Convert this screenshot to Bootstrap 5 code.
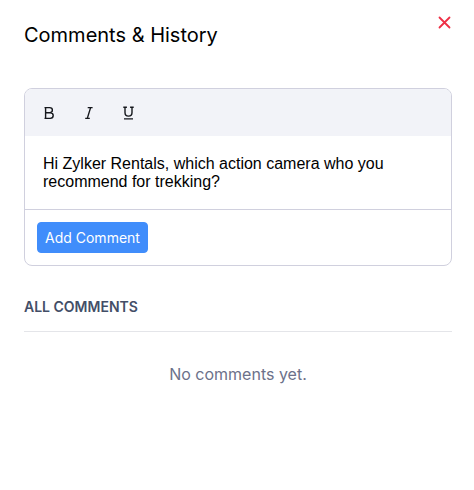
<!DOCTYPE html>
<html lang="en">
<head>
<meta charset="utf-8">
<meta name="viewport" content="width=device-width, initial-scale=1">
<title>Comments &amp; History</title>
<link href="https://cdn.jsdelivr.net/npm/bootstrap@5.3.0/dist/css/bootstrap.min.css" rel="stylesheet">
<style>
body { font-family: Inter, sans-serif; background: #fff; color: #000; }
.panel { padding: 16px 22px 24px 24px; }
.panel-title { font-size: 20px; line-height: 24px; font-weight: 400; margin-top: 7px; }
.icon-btn { line-height: 0; color: #15171c; }
.icon-btn svg { display: block; }
.close-btn { --bs-btn-color: #ee2f45; color: #ee2f45; margin-right: 1px; }
.editor { margin-top: 41px; border: 1px solid #d0d0de; border-radius: 8px; }
.editor-tools { background: #f2f3f8; height: 47px; padding: 0 17px; gap: 26px; }
.editor-text { font-family: "Liberation Sans", Arial, sans-serif; font-size: 16px; line-height: 18px; color: #000; padding: 19px 18px 18px; height: 73px; resize: none; }
.editor-foot { border-top: 1px solid #d0d0de; padding: 12px; }
.btn-add { --bs-btn-bg: #408dfb; --bs-btn-border-color: #408dfb; --bs-btn-padding-x: 7px; --bs-btn-padding-y: 5px; --bs-btn-font-size: 14px; --bs-btn-line-height: 19px; --bs-btn-border-radius: 4px; }
.list-title { font-size: 14px; line-height: 20px; font-weight: 600; color: #434e67; margin-top: 31px; padding-bottom: 14px; border-bottom: 1px solid #e4e5e9; }
.list-empty { font-size: 16px; line-height: 24px; color: #6c718a; margin-top: 30px; }
</style>
</head>
<body>
<main class="panel">
  <header class="d-flex justify-content-between align-items-start">
    <h1 class="panel-title mb-0">Comments &amp; History</h1>
    <button type="button" class="icon-btn close-btn btn border-0 p-0" aria-label="Close">
      <svg width="13" height="13" viewBox="0 0 13 13" fill="none" stroke="currentColor" stroke-width="1.8" stroke-linecap="round"><path d="M1.5 1.5 11.5 11.5M11.5 1.5 1.5 11.5"/></svg>
    </button>
  </header>

  <form class="editor overflow-hidden">
    <div class="editor-tools d-flex align-items-center">
      <button type="button" class="icon-btn btn border-0 p-0" aria-label="Bold">
        <svg width="14" height="14" viewBox="0 0 14 14" fill="none" stroke="currentColor" stroke-width="1.4"><path d="M2.5 1.6H7.6C9.3 1.6 10.4 2.6 10.4 4.1S9.3 6.7 7.6 6.7H3.6M3.6 1.6V12.4M2.5 12.4H8.2C10.1 12.4 11.2 11.3 11.2 9.6S10.1 6.7 8.2 6.7"/></svg>
      </button>
      <button type="button" class="icon-btn btn border-0 p-0" aria-label="Italic">
        <svg width="14" height="14" viewBox="0 0 14 14" fill="none" stroke="currentColor" stroke-width="1.4"><path d="M5.7 1.6H10.6M3.2 12.4H7.8M8.6 1.6 5.3 12.4"/></svg>
      </button>
      <button type="button" class="icon-btn btn border-0 p-0" aria-label="Underline">
        <svg width="14" height="14" viewBox="0 0 14 14" fill="none" stroke="currentColor" stroke-width="1.4"><path d="M1.3 1.2H4.9M8.1 1.2H11.7M3 1.2V6.4C3 8.7 4.4 10.1 6.5 10.1S10 8.7 10 6.4V1.2M2 12.9H11"/></svg>
      </button>
    </div>
    <textarea class="editor-text d-block w-100 border-0 bg-transparent overflow-hidden" aria-label="Comment">Hi Zylker Rentals, which action camera who you recommend for trekking?</textarea>
    <div class="editor-foot">
      <button type="button" class="btn btn-primary btn-add d-block">Add Comment</button>
    </div>
  </form>

  <section>
    <h2 class="list-title mb-0">ALL COMMENTS</h2>
    <p class="list-empty text-center mb-0">No comments yet.</p>
  </section>
</main>
<script src="https://cdn.jsdelivr.net/npm/bootstrap@5.3.0/dist/js/bootstrap.bundle.min.js"></script>
</body>
</html>
